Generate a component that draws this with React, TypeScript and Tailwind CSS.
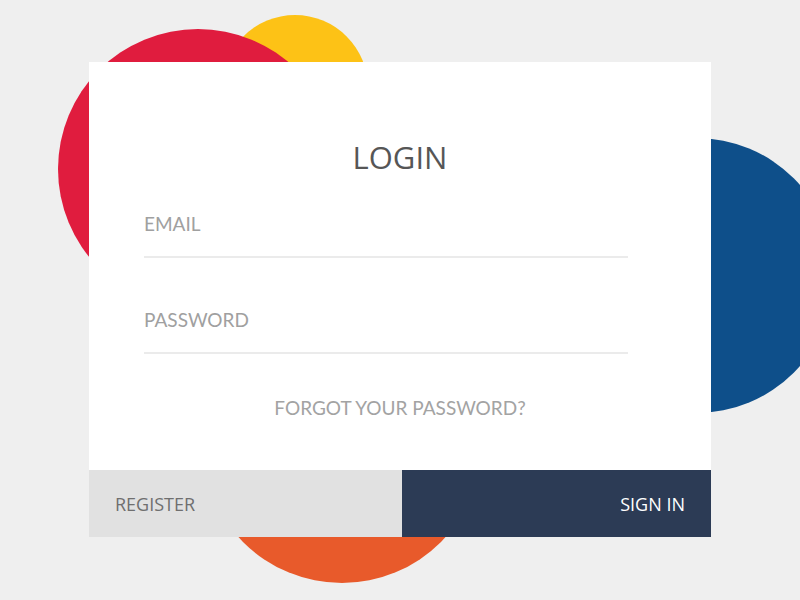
export default function App() {
  return (
    <div className="relative w-[800px] h-[600px] overflow-hidden bg-[#efefef] flex justify-center pt-[62px]">
      {/* decorative circles */}
      <div className="absolute left-[222px] top-[15px] w-[146px] h-[146px] rounded-full bg-[#fdc216]" />
      <div className="absolute left-[58px] top-[29px] w-[280px] h-[280px] rounded-full bg-[#e01c3e]" />
      <div className="absolute left-[559px] top-[138px] w-[275px] h-[275px] rounded-full bg-[#0e4f8a]" />
      <div className="absolute left-[202px] top-[303px] w-[280px] h-[280px] rounded-full bg-[#e85a2b]" />

      <div className="relative w-[622px] h-[475px] bg-white flex flex-col">
        <div className="flex-1 flex flex-col items-center pt-[80px] px-[55px]">
          <h1 className="text-[31px] leading-none text-[#565656] font-['Open_Sans',sans-serif]">LOGIN</h1>
          <div className="self-start w-[484px] mt-[41px] pb-[23px] border-b-2 border-[#ebebeb]">
            <span className="block text-[19px] leading-none text-[#a0a0a0] font-['Lato',sans-serif]">EMAIL</span>
          </div>
          <div className="self-start w-[484px] mt-[52px] pb-[23px] border-b-2 border-[#ebebeb]">
            <span className="block text-[19px] leading-none text-[#a0a0a0] font-['Lato',sans-serif]">PASSWORD</span>
          </div>
          <a className="mt-[44px] text-[19px] leading-none text-[#a3a3a3] font-['Lato',sans-serif]">FORGOT YOUR PASSWORD?</a>
        </div>
        <div className="h-[67px] flex">
          <button className="w-[313px] h-full bg-[#e1e1e1] flex items-center pl-[26px] text-[18px] leading-none text-[#6f6f6f] font-['Open_Sans',sans-serif]">
            REGISTER
          </button>
          <button className="flex-1 h-full bg-[#2c3b55] flex items-center justify-end pr-[26px] text-[18px] leading-none text-white font-['Open_Sans',sans-serif]">
            SIGN IN
          </button>
        </div>
      </div>
    </div>
  );
}
